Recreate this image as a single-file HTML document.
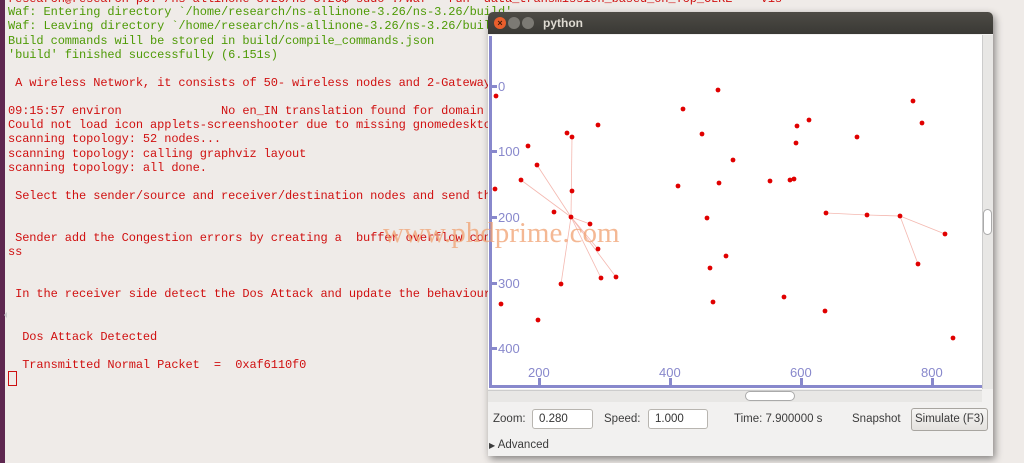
<!DOCTYPE html>
<html><head><meta charset="utf-8"><style>
*{margin:0;padding:0;box-sizing:border-box}
body{width:1024px;height:463px;overflow:hidden;background:#efebe8;position:relative;font-family:"Liberation Sans",sans-serif}
.t{position:absolute;left:8px;font-family:"Liberation Mono",monospace;font-size:12px;letter-spacing:-0.1px;line-height:14px;white-space:pre;color:#d01010}
.g{color:#4e9a06}
.ui{position:absolute;font-size:11.5px;color:#3c3c3c}
.box{position:absolute;background:#fff;border:1px solid #b8b5b0;border-radius:3px;font-size:11.5px;padding:3px 6px;color:#333}
</style></head><body>
<div style="position:absolute;left:0;top:0;width:5px;height:463px;background:#5e2750"></div>
<div class="t" style="top:-8px">research@research-pc:~/ns-allinone-3.26/ns-3.26$ sudo ./waf --run "data_transmission_based_on_Tcp_CLRE" --vis</div>
<div class="t g" style="top:5px">Waf: Entering directory `/home/research/ns-allinone-3.26/ns-3.26/build'</div>
<div class="t g" style="top:19px">Waf: Leaving directory `/home/research/ns-allinone-3.26/ns-3.26/build'</div>
<div class="t g" style="top:34px">Build commands will be stored in build/compile_commands.json</div>
<div class="t g" style="top:48px">'build' finished successfully (6.151s)</div>
<div class="t" style="top:76px"> A wireless Network, it consists of 50- wireless nodes and 2-Gateway</div>
<div class="t" style="top:104px">09:15:57 environ              No en_IN translation found for domain</div>
<div class="t" style="top:118px">Could not load icon applets-screenshooter due to missing gnomedesktop</div>
<div class="t" style="top:132px">scanning topology: 52 nodes...</div>
<div class="t" style="top:147px">scanning topology: calling graphviz layout</div>
<div class="t" style="top:161px">scanning topology: all done.</div>
<div class="t" style="top:189px"> Select the sender/source and receiver/destination nodes and send the</div>
<div class="t" style="top:231px"> Sender add the Congestion errors by creating a  buffer overflow condition                                                  roce</div>
<div class="t" style="top:245px">ss</div>
<div class="t" style="top:287px"> In the receiver side detect the Dos Attack and update the behaviour</div>
<div class="t" style="top:330px">  Dos Attack Detected</div>
<div class="t" style="top:358px">  Transmitted Normal Packet  =  0xaf6110f0</div>
<div style="position:absolute;left:8px;top:371px;width:9px;height:15px;border:1px solid #cc1010"></div>
<div style="position:absolute;left:1px;top:312px;width:0;height:0;border:3px solid transparent;border-right-color:#ccc"></div>

<div style="position:absolute;left:488px;top:12px;width:505px;height:444px;background:#f2f1f0;border-radius:5px 5px 0 0;box-shadow:2px 3px 8px rgba(0,0,0,.45)"></div>
<div style="position:absolute;left:488px;top:12px;width:505px;height:22px;background:linear-gradient(#4d4b45,#3a3935);border-radius:5px 5px 0 0"></div>
<div style="position:absolute;left:494px;top:17px;width:12px;height:12px;border-radius:50%;background:#e95e2c;color:#3a1a0a;font-size:9px;line-height:12px;text-align:center;font-weight:bold">×</div>
<div style="position:absolute;left:508px;top:17px;width:12px;height:12px;border-radius:50%;background:#7c7a74"></div>
<div style="position:absolute;left:522px;top:17px;width:12px;height:12px;border-radius:50%;background:#7c7a74"></div>
<div style="position:absolute;left:543px;top:16px;font-size:12px;font-weight:bold;color:#dfdbd2">python</div>
<div style="position:absolute;left:488px;top:35px;width:494px;height:354px;background:#fff"></div>
<div style="position:absolute;left:982px;top:35px;width:11px;height:354px;background:#e8e7e5;border-left:1px solid #ccc"></div>
<div style="position:absolute;left:983px;top:209px;width:9px;height:26px;background:#fff;border:1px solid #aaa;border-radius:5px"></div>
<div style="position:absolute;left:488px;top:390px;width:494px;height:12px;background:#e8e7e5;border-top:1px solid #ccc"></div>
<div style="position:absolute;left:745px;top:391px;width:50px;height:10px;background:#fff;border:1px solid #aaa;border-radius:5px"></div>

<svg style="position:absolute;left:0;top:0" width="1024" height="463">
<g stroke="#f4b8b0" stroke-width="0.8">
<line x1="571" y1="217" x2="537" y2="165"/><line x1="571" y1="217" x2="521" y2="180"/><line x1="571" y1="217" x2="572" y2="137"/><line x1="571" y1="217" x2="590" y2="224"/><line x1="571" y1="217" x2="598" y2="249"/><line x1="571" y1="217" x2="601" y2="278"/><line x1="571" y1="217" x2="616" y2="277"/><line x1="571" y1="217" x2="561" y2="284"/>
<line x1="826" y1="213" x2="867" y2="215"/><line x1="867" y1="215" x2="900" y2="216"/><line x1="900" y1="216" x2="945" y2="234"/><line x1="900" y1="216" x2="918" y2="264"/>
</g>
<g fill="#8888cc" font-family="Liberation Sans,sans-serif" font-size="13">
<rect x="489" y="36" width="3" height="352"/><rect x="489" y="385" width="493" height="3"/>
<rect x="489" y="85" width="8" height="3"/><rect x="489" y="150" width="8" height="3"/><rect x="489" y="216" width="8" height="3"/><rect x="489" y="282" width="8" height="3"/><rect x="489" y="347" width="8" height="3"/>
<text x="498" y="91">0</text><text x="498" y="156">100</text><text x="498" y="222">200</text><text x="498" y="288">300</text><text x="498" y="353">400</text>
<rect x="538" y="378" width="3" height="8"/><rect x="669" y="378" width="3" height="8"/><rect x="800" y="378" width="3" height="8"/><rect x="931" y="378" width="3" height="8"/>
<text x="528" y="377">200</text><text x="659" y="377">400</text><text x="790" y="377">600</text><text x="921" y="377">800</text>
</g>
<g fill="#e00000">
<circle cx="496" cy="96" r="2.4"/><circle cx="495" cy="189" r="2.4"/><circle cx="501" cy="304" r="2.4"/><circle cx="528" cy="146" r="2.4"/><circle cx="537" cy="165" r="2.4"/><circle cx="521" cy="180" r="2.4"/><circle cx="567" cy="133" r="2.4"/><circle cx="572" cy="137" r="2.4"/><circle cx="598" cy="125" r="2.4"/><circle cx="572" cy="191" r="2.4"/><circle cx="554" cy="212" r="2.4"/><circle cx="571" cy="217" r="2.4"/><circle cx="590" cy="224" r="2.4"/><circle cx="598" cy="249" r="2.4"/><circle cx="601" cy="278" r="2.4"/><circle cx="616" cy="277" r="2.4"/><circle cx="561" cy="284" r="2.4"/><circle cx="538" cy="320" r="2.4"/>
<circle cx="683" cy="109" r="2.4"/><circle cx="718" cy="90" r="2.4"/><circle cx="913" cy="101" r="2.4"/><circle cx="922" cy="123" r="2.4"/><circle cx="797" cy="126" r="2.4"/><circle cx="809" cy="120" r="2.4"/><circle cx="702" cy="134" r="2.4"/><circle cx="857" cy="137" r="2.4"/><circle cx="733" cy="160" r="2.4"/><circle cx="678" cy="186" r="2.4"/><circle cx="719" cy="183" r="2.4"/><circle cx="770" cy="181" r="2.4"/><circle cx="790" cy="180" r="2.4"/><circle cx="794" cy="179" r="2.4"/><circle cx="796" cy="143" r="2.4"/><circle cx="707" cy="218" r="2.4"/><circle cx="826" cy="213" r="2.4"/><circle cx="867" cy="215" r="2.4"/><circle cx="900" cy="216" r="2.4"/><circle cx="945" cy="234" r="2.4"/><circle cx="726" cy="256" r="2.4"/><circle cx="710" cy="268" r="2.4"/><circle cx="918" cy="264" r="2.4"/><circle cx="784" cy="297" r="2.4"/><circle cx="713" cy="302" r="2.4"/><circle cx="825" cy="311" r="2.4"/><circle cx="953" cy="338" r="2.4"/>
</g>
<text x="383" y="242" fill="#f0a070" fill-opacity="0.75" font-family="Liberation Serif,serif" font-size="29">www.phdprime.com</text>
</svg>

<div class="ui" style="left:493px;top:413px">Zoom:</div>
<div class="box" style="left:532px;top:409px;width:61px;height:20px">0.280</div>
<div class="ui" style="left:604px;top:413px">Speed:</div>
<div class="box" style="left:648px;top:409px;width:60px;height:20px">1.000</div>
<div class="ui" style="left:734px;top:413px">Time: 7.900000 s</div>
<div class="ui" style="left:852px;top:413px">Snapshot</div>
<div style="position:absolute;left:911px;top:408px;width:77px;height:23px;border:1px solid #a8a5a0;border-radius:3px;background:linear-gradient(#f6f5f4,#e4e2df);font-size:11.5px;color:#3c3c3c;text-align:center;line-height:21px">Simulate (F3)</div>
<div class="ui" style="left:489px;top:439px"><span style="font-size:8px">▶</span> Advanced</div>
</body></html>
